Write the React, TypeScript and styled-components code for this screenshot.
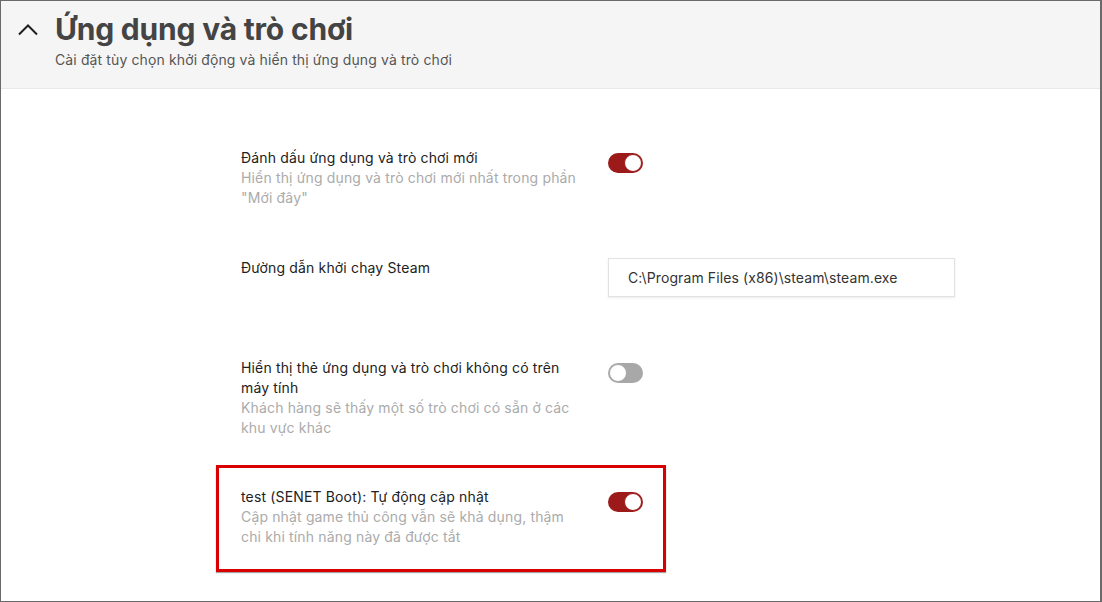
import styled, { createGlobalStyle } from "styled-components";

const GlobalStyle = createGlobalStyle`
  html, body {
    margin: 0;
    padding: 0;
    background: #ffffff;
  }
  body {
    font-family: Inter, "Noto Sans", "Liberation Sans", sans-serif;
  }
`;

type SettingRowProps = {
  title: string;
  description?: string;
  children: React.ReactNode;
};

function SettingRow({ title, description, children }: SettingRowProps) {
  return (
    <>
      <TextCol>
        <RowTitle>{title}</RowTitle>
        {description && <RowDesc>{description}</RowDesc>}
      </TextCol>
      <Control>{children}</Control>
    </>
  );
}

function Toggle({ on }: { on: boolean }) {
  return (
    <Track $on={on}>
      <Knob $on={on} />
    </Track>
  );
}

export default function App() {
  return (
    <Frame>
      <GlobalStyle />
      <Header>
        <Chevron width="22" height="13" viewBox="0 0 22 13">
          <path d="M2 11.5 L11 2.5 L20 11.5" fill="none" stroke="#1f1f1f" strokeWidth="2" />
        </Chevron>
        <HeaderText>
          <Title>Ứng dụng và trò chơi</Title>
          <Subtitle>Cài đặt tùy chọn khởi động và hiển thị ứng dụng và trò chơi</Subtitle>
        </HeaderText>
      </Header>
      <Content>
        <Row $top={59}>
          <SettingRow
            title="Đánh dấu ứng dụng và trò chơi mới"
            description={'Hiển thị ứng dụng và trò chơi mới nhất trong phần "Mới đây"'}
          >
            <Toggle on />
          </SettingRow>
        </Row>
        <Row $top={50}>
          <SettingRow title="Đường dẫn khởi chạy Steam">
            <PathInput>C:\Program Files (x86)\steam\steam.exe</PathInput>
          </SettingRow>
        </Row>
        <Row $top={61}>
          <SettingRow
            title="Hiển thị thẻ ứng dụng và trò chơi không có trên máy tính"
            description="Khách hàng sẽ thấy một số trò chơi có sẵn ở các khu vực khác"
          >
            <Toggle on={false} />
          </SettingRow>
        </Row>
        <Highlight>
          <SettingRow
            title="test (SENET Boot): Tự động cập nhật"
            description="Cập nhật game thủ công vẫn sẽ khả dụng, thậm chi khi tính năng này đã được tắt"
          >
            <Toggle on />
          </SettingRow>
        </Highlight>
      </Content>
    </Frame>
  );
}

const Frame = styled.div`
  width: 1102px;
  height: 602px;
  box-sizing: border-box;
  border: 1px solid #6a6a6a;
  border-right-width: 2px;
  overflow: hidden;
  background: #ffffff;
`;

const Header = styled.div`
  height: 88px;
  background: #f5f5f5;
  border-bottom: 1px solid #e8e8e8;
  display: flex;
  align-items: flex-start;
  gap: 16px;
  padding: 10px 20px 0 16px;
  box-sizing: border-box;
`;

const Chevron = styled.svg`
  margin-top: 12px;
  flex-shrink: 0;
`;

const HeaderText = styled.div`
  display: flex;
  flex-direction: column;
`;

const Title = styled.div`
  font-size: 30px;
  line-height: 36px;
  font-weight: 700;
  color: #444444;
  letter-spacing: -0.2px;
`;

const Subtitle = styled.div`
  font-size: 14px;
  line-height: 20px;
  color: #555555;
  margin-top: 3px;
  letter-spacing: 0.12px;
`;

const Content = styled.div`
  display: flex;
  flex-direction: column;
  align-items: flex-start;
  padding-left: 240px;
`;

const Row = styled.div<{ $top: number }>`
  display: flex;
  align-items: flex-start;
  gap: 22px;
  margin-top: ${(p) => p.$top}px;
`;

const Highlight = styled.div`
  display: flex;
  align-items: flex-start;
  gap: 22px;
  margin-top: 27px;
  margin-left: -25px;
  padding: 19px 20px 22px 22px;
  border: 3px solid #d80000;
  box-shadow: 0 1px 1px rgba(0, 0, 0, 0.35);
`;

const TextCol = styled.div`
  width: 345px;
  display: flex;
  flex-direction: column;
`;

const RowTitle = styled.div`
  font-size: 14px;
  line-height: 20px;
  color: #222222;
  letter-spacing: 0.15px;
`;

const RowDesc = styled.div`
  font-size: 14px;
  line-height: 20px;
  color: #ababab;
  letter-spacing: 0.15px;
`;

const Control = styled.div`
  display: flex;
`;

const Track = styled.div<{ $on: boolean }>`
  width: 35px;
  height: 20px;
  border-radius: 10px;
  margin-top: 5px;
  background: ${(p) => (p.$on ? "#9d1a1a" : "#a8a8a8")};
  display: flex;
  align-items: center;
  justify-content: ${(p) => (p.$on ? "flex-end" : "flex-start")};
  padding: 0 1px;
  box-sizing: border-box;
`;

const Knob = styled.div<{ $on: boolean }>`
  width: 18px;
  height: 18px;
  border-radius: 50%;
  background: #ffffff;
  box-sizing: border-box;
  border: 1.5px solid ${(p) => (p.$on ? "#9d1a1a" : "#a8a8a8")};
`;

const PathInput = styled.div`
  width: 347px;
  height: 39px;
  box-sizing: border-box;
  border: 1px solid #e2e2e2;
  box-shadow: 0 1px 2px rgba(0, 0, 0, 0.08);
  background: #ffffff;
  padding-left: 19px;
  display: flex;
  align-items: center;
  font-size: 14px;
  color: #333333;
  white-space: nowrap;
  letter-spacing: 0.1px;
`;
